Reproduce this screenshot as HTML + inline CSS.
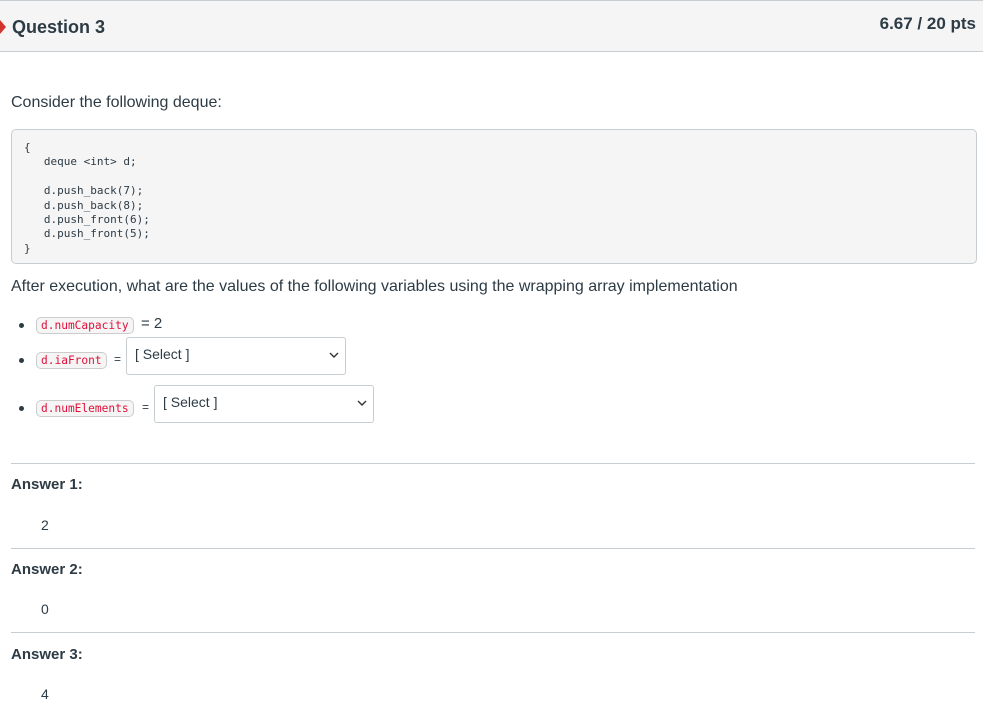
<!DOCTYPE html>
<html><head><style>
body{margin:0;width:983px;height:716px;background:#fff;font-family:"Liberation Sans",sans-serif;color:#2d3b45;position:relative;overflow:hidden}
.hdr{position:absolute;left:0;top:0;width:983px;height:50px;background:#f5f5f5;border-top:1px solid #c7cdd1;border-bottom:1px solid #c7cdd1}
.hdr .t{position:absolute;left:12px;top:16px;font-size:18px;font-weight:bold;color:#2d3b45}
.hdr .p{position:absolute;right:7px;top:13px;font-size:17px;font-weight:bold;color:#2d3b45}
.arrow{position:absolute;left:0;top:20px;width:0;height:0;border-top:7px solid transparent;border-bottom:7px solid transparent;border-left:6px solid #d0342c}
.txt{position:absolute;left:11px;font-size:16px;color:#2d3b45;white-space:nowrap}
pre{position:absolute;left:11px;top:129px;width:940px;height:111px;margin:0;padding:11px 12px;background:#f5f5f5;border:1px solid #c7cdd1;border-radius:5px;font-family:"DejaVu Sans Mono","Liberation Mono",monospace;font-size:11px;line-height:14.4px;color:#2d3b45}
.li{position:absolute;left:22px;font-size:14px}
.dot{position:absolute;left:-3px;top:6px;width:5px;height:5px;border-radius:50%;background:#2d3b45}
code{position:absolute;left:14px;top:0;background:#f5f5f5;border:1px solid #ccc;border-radius:5px;padding:1px 4px;color:#e0103a;font-family:"DejaVu Sans Mono",monospace;font-size:11.2px;white-space:nowrap}
.sel{position:absolute;height:36px;border:1px solid #c7cdd1;border-radius:3px;background:#fff;font-size:14px}
.sel span{position:absolute;left:8px;top:8px}
.sel svg{position:absolute;right:6px;top:14px}
.hr{position:absolute;left:11px;width:964px;border-top:1px solid #c7cdd1}
.ah{position:absolute;left:11px;font-size:15px;font-weight:bold}
.av{position:absolute;left:41px;font-size:14px}
</style></head><body>
<div class="hdr"><div class="t">Question 3</div><div class="p">6.67 / 20 pts</div></div>
<div class="arrow"></div>
<div class="txt" style="top:94px">Consider the following deque:</div>
<pre>{
   deque &lt;int&gt; d;

   d.push_back(7);
   d.push_back(8);
   d.push_front(6);
   d.push_front(5);
}</pre>
<div class="txt" style="top:278px">After execution, what are the values of the following variables using the wrapping array implementation</div>
<div class="li" style="top:317px"><div class="dot"></div><code>d.numCapacity</code><span style="position:absolute;left:119px;top:-2px;font-size:15px;white-space:nowrap">= 2</span></div>
<div class="li" style="top:352px"><div class="dot"></div><code>d.iaFront</code><span style="position:absolute;left:92px;top:0;font-size:12px">=</span></div>
<div class="sel" style="left:126px;top:337px;width:218px"><span>[ Select ]</span><svg width="10" height="7"><path d="M1 1l4 4 4-4" fill="none" stroke="#333" stroke-width="1.4"/></svg></div>
<div class="li" style="top:400px"><div class="dot"></div><code>d.numElements</code><span style="position:absolute;left:120px;top:0;font-size:12px">=</span></div>
<div class="sel" style="left:154px;top:385px;width:218px"><span>[ Select ]</span><svg width="10" height="7"><path d="M1 1l4 4 4-4" fill="none" stroke="#333" stroke-width="1.4"/></svg></div>
<div class="hr" style="top:463px"></div>
<div class="ah" style="top:476px">Answer 1:</div>
<div class="av" style="top:517px">2</div>
<div class="hr" style="top:548px"></div>
<div class="ah" style="top:561px">Answer 2:</div>
<div class="av" style="top:601px">0</div>
<div class="hr" style="top:632px"></div>
<div class="ah" style="top:646px">Answer 3:</div>
<div class="av" style="top:686px">4</div>
</body></html>
